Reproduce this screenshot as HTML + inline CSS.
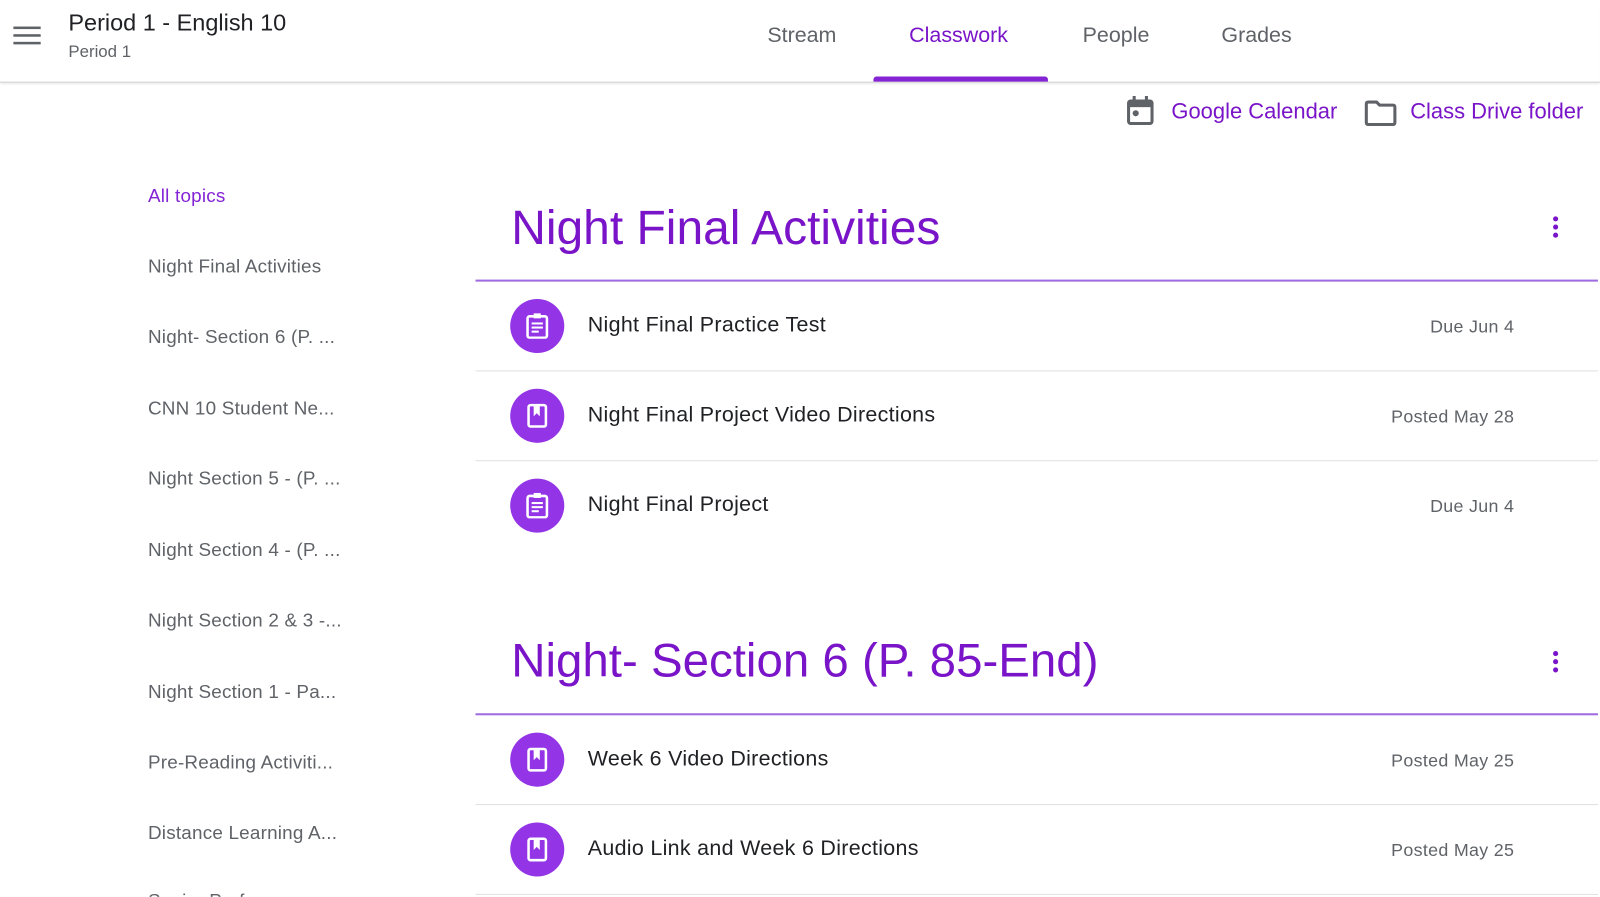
<!DOCTYPE html>
<html><head><meta charset="utf-8"><style>
*{margin:0;padding:0;box-sizing:border-box}
body{width:1600px;height:897px;overflow:hidden;background:#fff;font-family:"Liberation Sans",Arial,sans-serif;position:relative}
#w{position:absolute;left:0;top:0;width:1568px;height:879px;transform:scale(1.0204);transform-origin:0 0;overflow:hidden}
.hdr{position:absolute;left:0;top:0;width:1568px;height:81px;border-bottom:1px solid #d0d0d0;box-shadow:0 1px 3px rgba(0,0,0,.15);background:#fff}
.t1{position:absolute;left:67px;top:9px;font-size:23px;color:#202124}
.t2{position:absolute;left:67px;top:42px;font-size:16.5px;color:#5f6368}
.tab{position:absolute;top:23px;font-size:21px;color:#5f6368}
.ul{position:absolute;left:856px;top:75px;width:171px;height:5px;background:#8424d4;border-radius:3px 3px 0 0}
.lnk{position:absolute;top:97px;font-size:21.5px;color:#7a14c8}
.side{position:absolute;left:145px;font-size:18.5px;letter-spacing:.2px;color:#5f6368}
.h{position:absolute;left:501px;font-size:47px;color:#7a14c8}
.line{position:absolute;left:466px;width:1100px;height:2px;background:#a06ae0}
.sep{position:absolute;left:466px;width:1100px;height:1px;background:#e0e0e0}
.ic{position:absolute;left:500px;width:53px;height:53px;border-radius:50%;background:#9334e6}
.ic svg{position:absolute;left:14px;top:14px}
.it{position:absolute;left:576px;font-size:21px;letter-spacing:.3px;color:#202124}
.dt{position:absolute;right:84px;font-size:17.5px;letter-spacing:.3px;color:#5f6368}
.dots{position:absolute;left:1522px;width:6px}
.dots i{display:block;width:5px;height:5px;border-radius:50%;background:#7a14c8;margin-bottom:3px}
</style></head><body><div id="w">
<div class="hdr">
<svg style="position:absolute;left:13px;top:25px" width="27" height="20"><rect y="1" width="27" height="2.5" fill="#5f6368"/><rect y="8.5" width="27" height="2.5" fill="#5f6368"/><rect y="16" width="27" height="2.5" fill="#5f6368"/></svg>
<div class="t1">Period 1 - English 10</div><div class="t2">Period 1</div>
<div class="tab" style="left:752px">Stream</div>
<div class="tab" style="left:891px;color:#7a14c8">Classwork</div>
<div class="tab" style="left:1061px">People</div>
<div class="tab" style="left:1197px">Grades</div>
<div class="ul"></div>
</div>
<svg style="position:absolute;left:1104px;top:94px" width="28" height="30"><rect x="2" y="5" width="23" height="22" rx="2" fill="none" stroke="#5f6368" stroke-width="3"/><rect x="2" y="5" width="23" height="6" fill="#5f6368"/><rect x="6" y="0" width="3" height="6" fill="#5f6368"/><rect x="18" y="0" width="3" height="6" fill="#5f6368"/><circle cx="9" cy="17" r="3" fill="#5f6368"/></svg>
<div class="lnk" style="left:1148px">Google Calendar</div>
<svg style="position:absolute;left:1337px;top:98px" width="32" height="26"><path d="M2 4 Q2 2 4 2 H12 L15 5 H28 Q30 5 30 7 V22 Q30 24 28 24 H4 Q2 24 2 22 Z" fill="none" stroke="#5f6368" stroke-width="3"/></svg>
<div class="lnk" style="left:1382px">Class Drive folder</div>

<div class="side" style="top:181px;color:#8424d4">All topics</div>
<div class="side" style="top:250px">Night Final Activities</div>
<div class="side" style="top:319px">Night- Section 6 (P. ...</div>
<div class="side" style="top:389px">CNN 10 Student Ne...</div>
<div class="side" style="top:458px">Night Section 5 - (P. ...</div>
<div class="side" style="top:528px">Night Section 4 - (P. ...</div>
<div class="side" style="top:597px">Night Section 2 &amp; 3 -...</div>
<div class="side" style="top:667px">Night Section 1 - Pa...</div>
<div class="side" style="top:736px">Pre-Reading Activiti...</div>
<div class="side" style="top:805px">Distance Learning A...</div>
<div class="side" style="top:872px">Senior Prof...</div>

<div class="h" style="top:195px">Night Final Activities</div>
<div class="dots" style="top:212px"><i></i><i></i><i></i></div>
<div class="line" style="top:274px"></div>

<div class="ic" style="top:293px"><svg width="25" height="25"><rect x="3" y="3" width="19" height="21" rx="2" fill="none" stroke="#fff" stroke-width="2.5"/><rect x="9" y="0" width="7" height="5" fill="#fff"/><rect x="7" y="9" width="11" height="2" fill="#fff"/><rect x="7" y="13" width="11" height="2" fill="#fff"/><rect x="7" y="17" width="7" height="2" fill="#fff"/></svg></div>
<div class="it" style="top:307px">Night Final Practice Test</div><div class="dt" style="top:310px">Due Jun 4</div>
<div class="sep" style="top:363px"></div>
<div class="ic" style="top:381px"><svg width="25" height="25"><rect x="4" y="2" width="17" height="21" rx="2" fill="none" stroke="#fff" stroke-width="2.5"/><path d="M9 3 V13 L12 10 L15 13 V3 Z" fill="#fff"/></svg></div>
<div class="it" style="top:395px">Night Final Project Video Directions</div><div class="dt" style="top:398px">Posted May 28</div>
<div class="sep" style="top:451px"></div>
<div class="ic" style="top:469px"><svg width="25" height="25"><rect x="3" y="3" width="19" height="21" rx="2" fill="none" stroke="#fff" stroke-width="2.5"/><rect x="9" y="0" width="7" height="5" fill="#fff"/><rect x="7" y="9" width="11" height="2" fill="#fff"/><rect x="7" y="13" width="11" height="2" fill="#fff"/><rect x="7" y="17" width="7" height="2" fill="#fff"/></svg></div>
<div class="it" style="top:483px">Night Final Project</div><div class="dt" style="top:486px">Due Jun 4</div>

<div class="h" style="top:620px;font-size:46.5px">Night- Section 6 (P. 85-End)</div>
<div class="dots" style="top:638px"><i></i><i></i><i></i></div>
<div class="line" style="top:699px"></div>
<div class="ic" style="top:718px"><svg width="25" height="25"><rect x="4" y="2" width="17" height="21" rx="2" fill="none" stroke="#fff" stroke-width="2.5"/><path d="M9 3 V13 L12 10 L15 13 V3 Z" fill="#fff"/></svg></div>
<div class="it" style="top:732px">Week 6 Video Directions</div><div class="dt" style="top:735px">Posted May 25</div>
<div class="sep" style="top:788px"></div>
<div class="ic" style="top:806px"><svg width="25" height="25"><rect x="4" y="2" width="17" height="21" rx="2" fill="none" stroke="#fff" stroke-width="2.5"/><path d="M9 3 V13 L12 10 L15 13 V3 Z" fill="#fff"/></svg></div>
<div class="it" style="top:820px">Audio Link and Week 6 Directions</div><div class="dt" style="top:823px">Posted May 25</div>
<div class="sep" style="top:876px"></div>
</div></body></html>
